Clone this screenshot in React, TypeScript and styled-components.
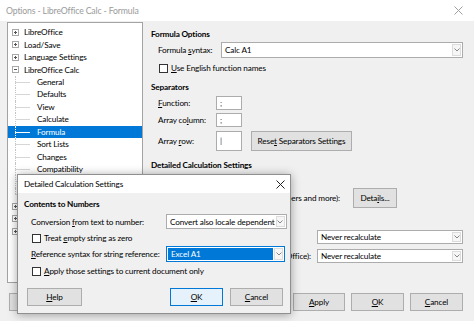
import React from "react";
import styled, { createGlobalStyle } from "styled-components";

const FONT = `Lato, "Noto Sans", "Liberation Sans", sans-serif`;

const Global = createGlobalStyle`
  html, body { margin: 0; padding: 0; background: #f0f0f0; }
  #root { width: 474px; height: 321px; }
`;

const Window = styled.div`
  position: relative;
  width: 474px;
  height: 321px;
  overflow: hidden;
  background: #f0f0f0;
  font-family: ${FONT};
  font-size: 8.2px;
  letter-spacing: -0.15px;
  color: #000;
  display: flex;
  flex-direction: column;
`;

const TitleBar = styled.div<{ $active?: boolean }>`
  height: ${(p) => (p.$active ? 18 : 21)}px;
  flex-shrink: 0;
  background: #fff;
  display: flex;
  align-items: center;
  justify-content: space-between;
  padding: ${(p) => (p.$active ? "0 5px 0 6px" : "0 11px 0 6px")};
  color: ${(p) => (p.$active ? "#000" : "#9a9a9a")};
  font-size: ${(p) => (p.$active ? "8.2px" : "8.7px")};
  white-space: nowrap;
`;

const Main = styled.div`
  height: 262px;
  display: flex;
  gap: 8px;
  padding: 1px 11px 0 7px;
  box-sizing: border-box;
`;

const TreePanel = styled.div`
  width: 136px;
  height: 261px;
  box-sizing: border-box;
  background: #fff;
  border: 1px solid #a3a3a3;
  padding-top: 3px;
  overflow: hidden;
  flex-shrink: 0;
`;

const TreeRow = styled.div<{ $selected?: boolean }>`
  height: 12.45px;
  display: flex;
  align-items: center;
  white-space: nowrap;
  background: ${(p) => (p.$selected ? "#0078d7" : "transparent")};
  color: ${(p) => (p.$selected ? "#fff" : "#000")};
`;

const Expander = styled.svg`
  width: 7px;
  height: 7px;
  margin: 0 5px 0 4px;
  flex-shrink: 0;
`;

const Branch = styled.span<{ $last?: boolean; $selected?: boolean }>`
  position: relative;
  align-self: stretch;
  width: 15px;
  margin: 0 7px 0 7px;
  flex-shrink: 0;
  &::before {
    content: "";
    position: absolute;
    left: 0;
    top: 0;
    bottom: ${(p) => (p.$last ? "50%" : "0")};
    border-left: 1px dotted ${(p) => (p.$selected ? "#fff" : "#c4c4c4")};
  }
  &::after {
    content: "";
    position: absolute;
    left: 0;
    right: 0;
    top: 50%;
    border-top: 1px solid ${(p) => (p.$selected ? "#fff" : "#d6d6d6")};
  }
`;

const RightPanel = styled.div`
  flex: 1;
  display: flex;
  flex-direction: column;
`;

const SectionTitle = styled.div<{ $mt: number; $indent?: number }>`
  margin-top: ${(p) => p.$mt}px;
  padding-left: ${(p) => p.$indent ?? 0}px;
  height: 12px;
  line-height: 12px;
  font-weight: 700;
  white-space: nowrap;
`;

const FieldRow = styled.div<{ $mt: number; $h: number; $indent?: number }>`
  margin-top: ${(p) => p.$mt}px;
  height: ${(p) => p.$h}px;
  padding-left: ${(p) => p.$indent ?? 7}px;
  display: flex;
  align-items: center;
  white-space: nowrap;
`;

const Label = styled.span<{ $w?: number }>`
  width: ${(p) => (p.$w ? `${p.$w}px` : "auto")};
  flex-shrink: 0;
  white-space: nowrap;
`;

const EndLabel = styled.span<{ $w: number; $pr?: number }>`
  width: ${(p) => p.$w}px;
  box-sizing: border-box;
  padding-right: ${(p) => p.$pr ?? 0}px;
  display: flex;
  justify-content: flex-end;
  white-space: nowrap;
  flex-shrink: 0;
`;

const Combo = styled.div<{ $w?: number; $focused?: boolean }>`
  ${(p) => (p.$w ? `width: ${p.$w}px;` : "flex: 1;")}
  align-self: stretch;
  box-sizing: border-box;
  display: flex;
  background: #fff;
  border: 1px solid ${(p) => (p.$focused ? "#0078d7" : "#acacac")};
`;

const ComboText = styled.span<{ $selected?: boolean }>`
  flex: 1;
  display: flex;
  align-items: center;
  padding-left: 3px;
  margin: ${(p) => (p.$selected ? "1px 0 1px 1px" : "0")};
  background: ${(p) => (p.$selected ? "#0078d7" : "transparent")};
  color: ${(p) => (p.$selected ? "#fff" : "#000")};
  overflow: hidden;
  white-space: nowrap;
`;

const ComboButton = styled.span`
  width: 9px;
  margin: 1px;
  box-sizing: border-box;
  border: 1px solid #dcdcdc;
  background: #f6f6f6;
  display: flex;
  align-items: center;
  justify-content: center;
`;

const TextInput = styled.div<{ $w: number }>`
  width: ${(p) => p.$w}px;
  align-self: stretch;
  box-sizing: border-box;
  background: #fff;
  border: 1px solid #acacac;
  display: flex;
  align-items: center;
  padding-left: 3px;
  color: #444;
`;

const Button = styled.div<{ $w: number; $ml?: number; $focused?: boolean }>`
  width: ${(p) => p.$w}px;
  margin-left: ${(p) => p.$ml ?? 0}px;
  align-self: stretch;
  box-sizing: border-box;
  background: ${(p) => (p.$focused ? "#e5f1fb" : "#e1e1e1")};
  border: 1px solid ${(p) => (p.$focused ? "#0078d7" : "#adadad")};
  display: flex;
  align-items: center;
  justify-content: center;
  white-space: nowrap;
  flex-shrink: 0;
`;

const CheckBox = styled.span`
  width: 9px;
  height: 9px;
  box-sizing: border-box;
  border: 1px solid #333;
  background: #fff;
  margin-right: 3px;
  flex-shrink: 0;
`;

const Radio = styled.span`
  width: 9px;
  height: 9px;
  box-sizing: border-box;
  border: 1px solid #333;
  border-radius: 50%;
  background: #fff;
  margin-right: 4px;
  flex-shrink: 0;
`;

const LabelGrid = styled.div<{ $mt: number }>`
  margin-top: ${(p) => p.$mt}px;
  display: grid;
  grid-template-columns: 153px 1fr;
  column-gap: 6px;
  row-gap: 5px;
  padding-left: 7px;
  grid-auto-rows: 14px;
  align-items: center;
`;

const BottomBar = styled.div`
  display: flex;
  padding: 10px 11px 0 9px;
  height: 18px;
`;

const Spacer = styled.span`
  flex: 1;
`;

const Dialog = styled.div`
  position: absolute;
  left: 17px;
  top: 174px;
  width: 274px;
  height: 140px;
  box-sizing: border-box;
  border: 1px solid #8f8f8f;
  background: #f0f0f0;
  box-shadow: 0 1px 9px rgba(0, 0, 0, 0.35);
  display: flex;
  flex-direction: column;
`;

const DialogBody = styled.div`
  flex: 1;
  display: flex;
  flex-direction: column;
  padding: 0 5px 0 6px;
`;

const DialogButtons = styled.div`
  margin-top: 11px;
  height: 18px;
  display: flex;
  padding: 0 2px 0 3px;
`;

const Key = styled.span`
  text-decoration: underline;
  text-underline-offset: 1px;
`;

const CloseIcon = ({ color }: { color: string }) => (
  <svg width="9" height="9" viewBox="0 0 9 9">
    <path d="M0.5 0.5 L8.5 8.5 M8.5 0.5 L0.5 8.5" stroke={color} strokeWidth="1" fill="none" />
  </svg>
);

const Chevron = () => (
  <svg width="6" height="4" viewBox="0 0 6 4">
    <path d="M0.5 0.5 L3 3 L5.5 0.5" stroke="#7a7a7a" strokeWidth="0.9" fill="none" />
  </svg>
);

const ExpanderIcon = ({ open }: { open: boolean }) => (
  <Expander viewBox="0 0 7 7">
    <rect x="0.5" y="0.5" width="6" height="6" fill="#fff" stroke="#a8a8a8" />
    <path d="M2 3.5 H5" stroke="#555" strokeWidth="1" />
    {!open && <path d="M3.5 2 V5" stroke="#555" strokeWidth="1" />}
  </Expander>
);

type Node = { label: string; level: number; exp?: "plus" | "minus"; selected?: boolean; last?: boolean };

const tree: Node[] = [
  { label: "LibreOffice", level: 0, exp: "plus" },
  { label: "Load/Save", level: 0, exp: "plus" },
  { label: "Language Settings", level: 0, exp: "plus" },
  { label: "LibreOffice Calc", level: 0, exp: "minus" },
  { label: "General", level: 1 },
  { label: "Defaults", level: 1 },
  { label: "View", level: 1 },
  { label: "Calculate", level: 1 },
  { label: "Formula", level: 1, selected: true },
  { label: "Sort Lists", level: 1 },
  { label: "Changes", level: 1 },
  { label: "Compatibility", level: 1 },
  { label: "Grid", level: 1 },
  { label: "Print", level: 1, last: true },
  { label: "LibreOffice Base", level: 0, exp: "plus" },
  { label: "Charts", level: 0, exp: "plus" },
  { label: "Internet", level: 0, exp: "plus" },
];

const ComboBox = ({ text, w, focused }: { text: string; w?: number; focused?: boolean }) => (
  <Combo $w={w} $focused={focused}>
    <ComboText $selected={focused}>{text}</ComboText>
    <ComboButton>
      <Chevron />
    </ComboButton>
  </Combo>
);

export default function App() {
  return (
    <>
      <Global />
      <Window>
        <TitleBar>
          <span>Options - LibreOffice Calc - Formula</span>
          <CloseIcon color="#a0a0a0" />
        </TitleBar>
        <Main>
          <TreePanel>
            {tree.map((n) => (
              <TreeRow key={n.label} $selected={n.selected}>
                {n.level === 0 ? (
                  <ExpanderIcon open={n.exp === "minus"} />
                ) : (
                  <Branch $last={n.last} $selected={n.selected} />
                )}
                {n.label}
              </TreeRow>
            ))}
          </TreePanel>
          <RightPanel>
            <SectionTitle $mt={6}>Formula Options</SectionTitle>
            <FieldRow $mt={2} $h={16}>
              <Label $w={63}>
                Formula <Key>s</Key>yntax:
              </Label>
              <ComboBox text="Calc A1" />
            </FieldRow>
            <FieldRow $mt={4} $h={12} $indent={8}>
              <CheckBox />
              <span>
                <Key>U</Key>se English function names
              </span>
            </FieldRow>
            <SectionTitle $mt={7}>Separators</SectionTitle>
            <FieldRow $mt={3} $h={14}>
              <Label $w={58}>
                <Key>F</Key>unction:
              </Label>
              <TextInput $w={26}>;</TextInput>
            </FieldRow>
            <FieldRow $mt={3} $h={14}>
              <Label $w={58}>
                Array co<Key>l</Key>umn:
              </Label>
              <TextInput $w={26}>;</TextInput>
            </FieldRow>
            <FieldRow $mt={4} $h={20}>
              <Label $w={58}>
                Array <Key>r</Key>ow:
              </Label>
              <TextInput $w={26}>|</TextInput>
              <Button $w={101} $ml={9}>
                Rese<Key>t</Key>&nbsp;Separators Settings
              </Button>
            </FieldRow>
            <SectionTitle $mt={8}>Detailed Calculation Settings</SectionTitle>
            <FieldRow $mt={3} $h={12}>
              <Radio />
              <span>Default settings</span>
            </FieldRow>
            <FieldRow $mt={2} $h={20}>
              <Radio />
              <EndLabel $w={182} $pr={13}>
                Custom (conversion of text to numbers and more):
              </EndLabel>
              <Button $w={44}>
                Deta<Key>i</Key>ls...
              </Button>
            </FieldRow>
            <SectionTitle $mt={6}>Recalculation on File Load</SectionTitle>
            <LabelGrid $mt={4}>
              <Label>Excel 2007 and newer:</Label>
              <ComboBox text="Never recalculate" />
              <EndLabel $w={153}>ODF spreadsheet (not saved by LibreOffice):</EndLabel>
              <ComboBox text="Never recalculate" />
            </LabelGrid>
          </RightPanel>
        </Main>
        <BottomBar>
          <Button $w={55}>
            <Key>H</Key>elp
          </Button>
          <Button $w={55} $ml={6}>
            <Key>R</Key>eset
          </Button>
          <Spacer />
          <Button $w={52}>
            <Key>A</Key>pply
          </Button>
          <Button $w={53} $ml={6}>
            <Key>O</Key>K
          </Button>
          <Button $w={53} $ml={6}>
            <Key>C</Key>ancel
          </Button>
        </BottomBar>

        <Dialog>
          <TitleBar $active>
            <span>Detailed Calculation Settings</span>
            <CloseIcon color="#222" />
          </TitleBar>
          <DialogBody>
            <SectionTitle $mt={5}>Contents to Numbers</SectionTitle>
            <FieldRow $mt={4} $h={15}>
              <Label $w={135}>
                Conversion <Key>f</Key>rom text to number:
              </Label>
              <ComboBox text="Convert also locale dependent" />
            </FieldRow>
            <FieldRow $mt={3} $h={12} $indent={8}>
              <CheckBox />
              <span>
                Treat <Key>e</Key>mpty string as zero
              </span>
            </FieldRow>
            <FieldRow $mt={2} $h={16}>
              <Label $w={135}>
                <Key>R</Key>eference syntax for string reference:
              </Label>
              <ComboBox text="Excel A1" focused />
            </FieldRow>
            <FieldRow $mt={3} $h={12} $indent={8}>
              <CheckBox />
              <span>
                <Key>A</Key>pply those settings to current document only
              </span>
            </FieldRow>
            <DialogButtons>
              <Button $w={55}>
                <Key>H</Key>elp
              </Button>
              <Spacer />
              <Button $w={53} $focused>
                <Key>O</Key>K
              </Button>
              <Button $w={53} $ml={7}>
                <Key>C</Key>ancel
              </Button>
            </DialogButtons>
          </DialogBody>
        </Dialog>
      </Window>
    </>
  );
}
